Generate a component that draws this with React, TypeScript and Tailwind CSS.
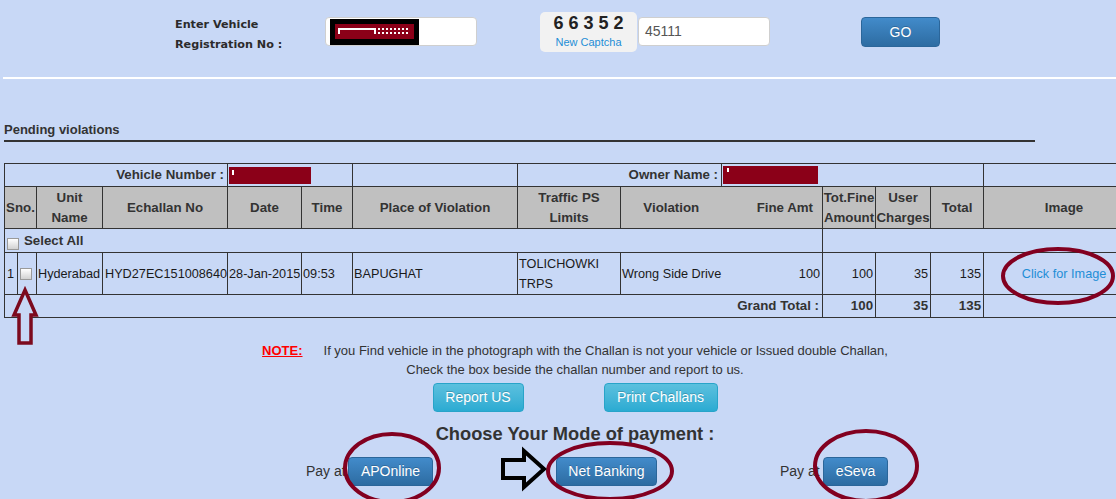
import * as React from "react"

const bg = "#c8d8f6"

function Box({ className = "" }: { className?: string }) {
	return (
		<span
			className={
				"inline-block h-[12px] w-[12px] border border-[#9a9a9a] bg-linear-to-b from-white to-[#d2d2d2] " +
				className
			}
		/>
	)
}

function BlueButton({ children, className = "" }: { children: React.ReactNode; className?: string }) {
	return (
		<button
			className={
				"flex h-[29px] items-center justify-center rounded-[4px] border border-[#2b669a] bg-linear-to-b from-[#428bca] to-[#2d6ca2] text-[14px] text-white [text-shadow:0_-1px_0_rgba(0,0,0,0.2)] " +
				className
			}
		>
			{children}
		</button>
	)
}

function InfoButton({ children, className = "" }: { children: React.ReactNode; className?: string }) {
	return (
		<button
			className={
				"flex h-[29px] items-center justify-center rounded-[4px] border border-[#28a4c9] bg-linear-to-b from-[#5bc0de] to-[#2aabd2] text-[14px] text-white [text-shadow:0_-1px_0_rgba(0,0,0,0.2)] " +
				className
			}
		>
			{children}
		</button>
	)
}

function SearchBar() {
	return (
		<div className="flex h-[77px] items-start">
			<div className="ml-[175px] mt-[15px] w-[150px] font-['DejaVu_Sans',sans-serif] text-[11.2px] font-bold leading-[20px] text-[#2b2b2b]">
				Enter Vehicle
				<br />
				Registration No :
			</div>
			<div className="mt-[17px] flex h-[29px] w-[152px] items-center rounded-[4px] border border-[#cfcfcf] bg-white pl-[4px]">
				<div className="flex h-[26px] w-[89px] items-start bg-black px-[5px] pt-[5px]">
					<div className="flex h-[15px] w-full items-center gap-[2px] bg-[#8b0018] px-[3px]">
						<span className="h-[6px] w-[38px] border-x-2 border-t-2 border-white" />
						<span className="h-[6px] w-[30px] border-2 border-dotted border-white" />
					</div>
				</div>
			</div>
			<div className="ml-[63px] mt-[12px] flex h-[40px] w-[97px] flex-col items-center rounded-[5px] bg-[#f2f2f2] pt-[1px]">
				<div className="text-[18px] font-bold leading-[20px] text-[#222]">6 6 3 5 2</div>
				<div className="text-[11px] leading-[18px] text-[#1e8ed6]">New Captcha</div>
			</div>
			<div className="ml-[1px] mt-[17px] flex h-[29px] w-[132px] items-center rounded-[4px] border border-[#cfcfcf] bg-white pl-[6px] text-[14px] text-[#555]">
				45111
			</div>
			<BlueButton className="ml-[91px] mt-[17px] h-[30px] w-[79px]">GO</BlueButton>
		</div>
	)
}

const td = "border border-[#333] p-0"
const th = "border border-[#333] p-0 bg-[#c0c0c0] font-bold text-[#333] text-center"

function ViolationsTable() {
	return (
		<table className="ml-[4px] mt-[21px] w-[1140px] table-fixed border-collapse text-[12.7px] text-[#1a1a1a]">
			<colgroup>
				<col className="w-[13px]" />
				<col className="w-[19px]" />
				<col className="w-[66px]" />
				<col className="w-[125px]" />
				<col className="w-[74px]" />
				<col className="w-[51px]" />
				<col className="w-[165px]" />
				<col className="w-[103px]" />
				<col className="w-[101px]" />
				<col className="w-[101px]" />
				<col className="w-[53px]" />
				<col className="w-[55px]" />
				<col className="w-[53px]" />
				<col className="w-[161px]" />
			</colgroup>
			<tbody>
				<tr className="h-[23px] text-[13.3px] font-bold text-[#333]">
					<td colSpan={4} className={td + " pr-[3px] text-right"}>
						Vehicle Number :
					</td>
					<td colSpan={2} className={td + " pl-[1px] align-middle"}>
						<div className="flex h-[17px] w-[82px] items-start bg-[#8b0018] pl-[3px] pt-[3px]">
							<span className="h-[5px] w-[2px] bg-white" />
						</div>
					</td>
					<td className={td} />
					<td colSpan={2} className={td + " pr-[3px] text-right"}>
						Owner Name :
					</td>
					<td colSpan={4} className={td + " pl-[1px]"}>
						<div className="flex h-[18px] w-[95px] items-start bg-[#8b0018] pl-[4px] pt-[2px]">
							<span className="h-[4px] w-[2px] bg-white" />
						</div>
					</td>
					<td className={td} />
				</tr>
				<tr className="h-[42px] text-[13.3px] leading-[20px]">
					<th colSpan={2} className={th}>
						Sno.
					</th>
					<th className={th}>
						Unit
						<br />
						Name
					</th>
					<th className={th}>Echallan No</th>
					<th className={th}>Date</th>
					<th className={th}>Time</th>
					<th className={th}>Place of Violation</th>
					<th className={th}>
						Traffic PS
						<br />
						Limits
					</th>
					<th className={th + " border-r-0"}>Violation</th>
					<th className={th + " border-l-0 pr-[9px] text-right"}>Fine Amt</th>
					<th className={th + " whitespace-nowrap"}>
						Tot.Fine
						<br />
						Amount
					</th>
					<th className={th + " whitespace-nowrap"}>
						User
						<br />
						Charges
					</th>
					<th className={th}>Total</th>
					<th className={th}>Image</th>
				</tr>
				<tr className="h-[24px]">
					<td colSpan={10} className={td + " pl-[2px]"}>
						<div className="flex items-center">
							<Box className="mt-[6px]" />
							<span className="ml-[5px] text-[13.3px] font-bold text-[#333]">Select All</span>
						</div>
					</td>
					<td colSpan={4} className={td} />
				</tr>
				<tr className="h-[42px] leading-[20px]">
					<td className={td + " pl-[2px]"}>1</td>
					<td className={td + " pl-[2px]"}>
						<Box className="mt-[6px] block" />
					</td>
					<td className={td + " pl-[1px] whitespace-nowrap"}>Hyderabad</td>
					<td className={td + " pl-[2px] whitespace-nowrap"}>HYD27EC151008640</td>
					<td className={td + " pl-[1px] whitespace-nowrap"}>28-Jan-2015</td>
					<td className={td + " pl-[1px]"}>09:53</td>
					<td className={td + " pl-[1px]"}>BAPUGHAT</td>
					<td className={td + " pl-[1px]"}>
						TOLICHOWKI
						<br />
						TRPS
					</td>
					<td className={td + " border-r-0 pl-[1px] whitespace-nowrap"}>Wrong Side Drive</td>
					<td className={td + " border-l-0 pr-[2px] text-right"}>100</td>
					<td className={td + " pr-[2px] text-right"}>100</td>
					<td className={td + " pr-[2px] text-right"}>35</td>
					<td className={td + " pr-[2px] text-right"}>135</td>
					<td className={td + " text-center text-[#1e8ed6]"}>Click for Image</td>
				</tr>
				<tr className="h-[23px] text-[13.3px] font-bold text-[#333]">
					<td colSpan={10} className={td + " pr-[3px] text-right"}>
						Grand Total :
					</td>
					<td className={td + " pr-[2px] text-right"}>100</td>
					<td className={td + " pr-[2px] text-right"}>35</td>
					<td className={td + " pr-[2px] text-right"}>135</td>
					<td className={td} />
				</tr>
			</tbody>
		</table>
	)
}

function Annotations() {
	return (
		<svg className="pointer-events-none absolute left-0 top-0" width="1116" height="499" viewBox="0 0 1116 499">
			<g fill="none" stroke="#820020" strokeWidth="4">
				<ellipse cx="1058" cy="276" rx="55" ry="27" />
				<ellipse cx="392" cy="468" rx="47" ry="34" />
				<ellipse cx="610" cy="471" rx="62" ry="28" />
				<ellipse cx="866" cy="466" rx="51" ry="35" />
			</g>
			<polygon
				points="25,290 36,315 31,315 31,343 19,343 19,315 14,315"
				fill={bg}
				stroke="#7c0a1e"
				strokeWidth="3.5"
			/>
			<polygon
				points="503,460 524,460 524,451 544,469 524,487 524,478 503,478"
				fill={bg}
				stroke="#000"
				strokeWidth="4"
			/>
		</svg>
	)
}

export default function App() {
	return (
		<div className="relative h-[499px] w-[1116px] overflow-hidden bg-[#c8d8f6] font-['Liberation_Sans',Arial,sans-serif]">
			<SearchBar />
			<div className="ml-[3px] h-[2px] bg-white" />

			<div className="ml-[4px] mt-[43px] w-[1031px] border-b-2 border-[#333] pb-[2px] text-[13px] font-bold leading-[16px] text-[#333]">
				Pending violations
			</div>

			<ViolationsTable />

			<div className="pl-[34px] text-center">
				<p className="mt-[23px] text-[13px] leading-[19px] text-[#333]">
					<span className="mr-[21px] font-bold text-[#ff0000] underline">NOTE:</span>
					If you Find vehicle in the photograph with the Challan is not your vehicle or Issued double Challan,
					<br />
					Check the box beside the challan number and report to us.
				</p>
				<div className="mt-[4px] flex justify-center gap-[80px]">
					<InfoButton className="w-[91px]">Report US</InfoButton>
					<InfoButton className="w-[114px]">Print Challans</InfoButton>
				</div>
				<h2 className="mt-[11px] text-[18.3px] font-bold leading-[22px] text-[#333]">Choose Your Mode of payment :</h2>
			</div>

			<div className="ml-[306px] mt-[12px] flex items-center text-[14px] text-[#333]">
				<span className="w-[42px]">Pay at</span>
				<BlueButton className="w-[85px]">APOnline</BlueButton>
				<BlueButton className="ml-[123px] w-[101px]">Net Banking</BlueButton>
				<span className="ml-[123px] w-[43px]">Pay at</span>
				<BlueButton className="w-[65px]">eSeva</BlueButton>
			</div>

			<Annotations />
		</div>
	)
}
